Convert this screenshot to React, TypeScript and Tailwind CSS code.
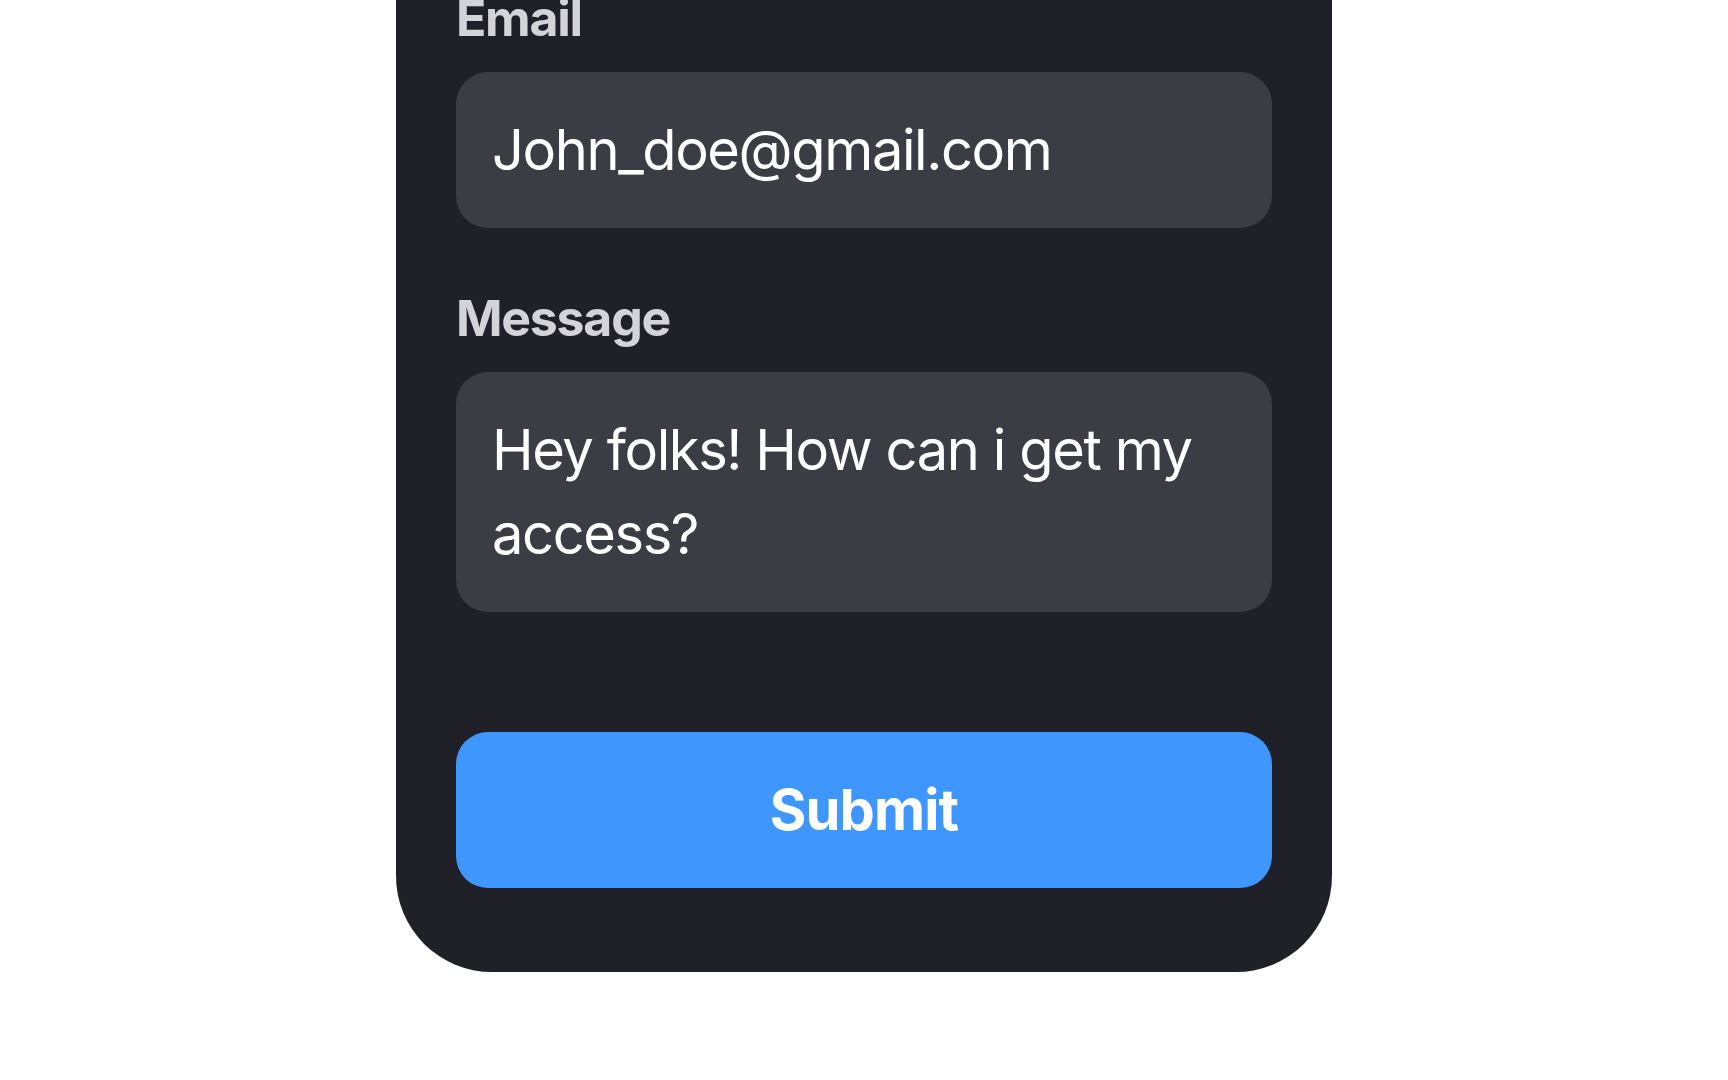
export default function App() {
  return (
    <div className="flex h-[1080px] w-full justify-center overflow-hidden bg-white font-['Inter',sans-serif]">
      <form className="-mt-[120px] flex h-fit w-[936px] flex-col rounded-[96px] bg-[#202028] px-[60px] pb-[84px] pt-[101px]">
        <label className="mb-4 text-[50px] font-bold leading-[75px] tracking-[-0.025em] text-[#d4d4d8]">Email</label>
        <div className="rounded-[32px] bg-[#3c3c44] p-9 text-[56px] leading-[84px] tracking-[-0.025em] text-white">
          John_doe@gmail.com
        </div>

        <label className="mb-4 mt-[53px] text-[50px] font-bold leading-[75px] tracking-[-0.025em] text-[#d4d4d8]">
          Message
        </label>
        <div className="rounded-[32px] bg-[#3c3c44] p-9 text-[56px] leading-[84px] tracking-[-0.025em] text-white">
          Hey folks! How can i get my access?
        </div>

        <button
          type="button"
          className="mt-[120px] rounded-[32px] bg-[#3f97fe] p-9 text-[56px] font-bold leading-[84px] tracking-[-0.015em] text-white"
        >
          Submit
        </button>
      </form>
    </div>
  );
}
